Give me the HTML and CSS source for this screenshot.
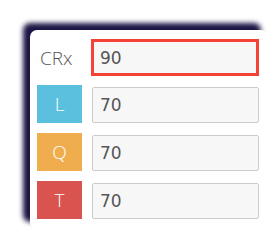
FILE: index.html
```html
<!DOCTYPE html>
<html>
<head>
<meta charset="utf-8">
<link rel="stylesheet" href="styles.css">
</head>
<body>
<div class="panel">
  <div class="row first">
    <div class="label plain">CRx</div>
    <div class="field active">90</div>
  </div>
  <div class="row">
    <div class="label tag blue">L</div>
    <div class="field">70</div>
  </div>
  <div class="row">
    <div class="label tag orange">Q</div>
    <div class="field">70</div>
  </div>
  <div class="row">
    <div class="label tag red">T</div>
    <div class="field">70</div>
  </div>
</div>
</body>
</html>
```
FILE: styles.css
```css
html, body {
  margin: 0;
  padding: 0;
  background: #ffffff;
  overflow: hidden;
}
body {
  width: 268px;
  height: 229px;
  font-family: "DejaVu Sans", "Liberation Sans", sans-serif;
}
.panel {
  margin: 30px 0 0 30px;
  width: 238px;
  height: 199px;
  background: #ffffff;
  border-radius: 7px;
  box-shadow: -7px -7px 5px #1c1646;
  box-sizing: border-box;
  padding: 9px 9px 0 7px;
  display: flex;
  flex-direction: column;
}
.row {
  display: flex;
  align-items: flex-end;
  margin-top: 10px;
  height: 38px;
}
.row.first {
  margin-top: 0;
  height: 37px;
  margin-bottom: -1px;
}
.label {
  width: 45px;
  height: 38px;
  flex: none;
  display: flex;
  align-items: center;
  justify-content: center;
  font-family: "Open Sans", "DejaVu Sans", sans-serif;
  font-weight: 300;
  font-size: 19px;
  margin-right: 10px;
}
.plain {
  height: 37px;
  color: #555555;
  justify-content: flex-start;
  padding-left: 3px;
  box-sizing: border-box;
}
.tag {
  color: #ffffff;
}
.blue { background: #5bc0de; }
.orange { background: #f0ad4e; }
.red { background: #d9534f; }
.field {
  width: 167px;
  height: 36px;
  box-sizing: border-box;
  border: 1px solid #cccccc;
  border-radius: 2px;
  background: #f7f7f7;
  color: #555555;
  font-size: 17px;
  padding-left: 7px;
  display: flex;
  align-items: center;
}
.field.active {
  width: 170px;
  height: 37px;
  margin-left: -1px;
  border: 3px solid #f44336;
  border-radius: 0;
  padding-left: 6px;
}
```
